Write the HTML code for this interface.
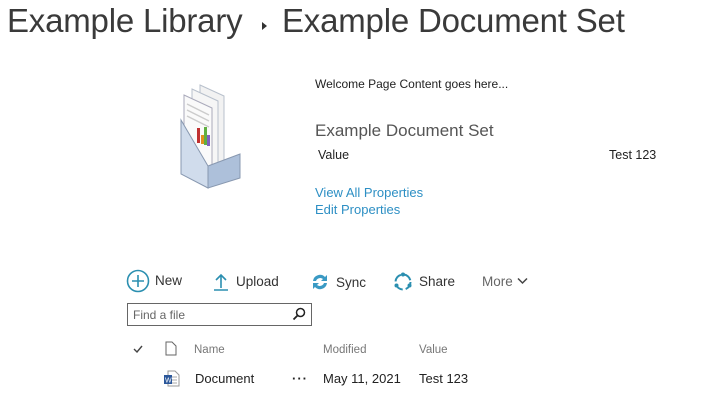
<!DOCTYPE html>
<html><head><meta charset="utf-8"><style>
*{margin:0;padding:0;box-sizing:border-box}
body{width:704px;height:401px;background:#fff;font-family:"Liberation Sans",sans-serif;color:#333;position:relative;overflow:hidden}
.a{position:absolute;white-space:nowrap}
.t{font-size:33px;color:#3a3a3a;font-weight:300;letter-spacing:-0.2px}
.link{color:#2d8fc4;font-size:13px}
.cmd{font-size:13.5px;color:#333}
.hdr{font-size:11.5px;color:#777}
</style></head><body>
<div class="a t" style="left:7px;top:2px">Example Library</div>
<svg class="a" style="left:261px;top:21px" width="7" height="10"><path d="M1 1L6 5L1 9Z" fill="#333"/></svg>
<div class="a t" style="left:282px;top:2px">Example Document Set</div>

<svg class="a" style="left:178px;top:82px" width="70" height="110" viewBox="0 0 70 110">
<path d="M22 3L46 14V86L22 75Z" fill="#f2f2f2" stroke="#b8c0cc"/>
<path d="M14 7L40 19V90L14 78Z" fill="#f6f6f6" stroke="#b8c0cc"/>
<path d="M6 13L34 26V94L6 82Z" fill="#fafafa" stroke="#aab"/>
<path d="M9 22L31 33M9 28L31 39M9 34L31 45" stroke="#ccc" stroke-width="1.5"/>
<rect x="19" y="46" width="3" height="15" fill="#c03030"/>
<rect x="23" y="53" width="3" height="9" fill="#e09020"/>
<rect x="26" y="45" width="3" height="18" fill="#60b040"/>
<rect x="29" y="53" width="3" height="11" fill="#8060c0"/>
<path d="M3 38L30 84L30 106L3 92Z" fill="#d0dcec" stroke="#8898b0"/>
<path d="M30 84L62 72V96L30 106Z" fill="#adc0da" stroke="#8898b0"/>
</svg>

<div class="a" style="left:315px;top:77px;font-size:12px;color:#222">Welcome Page Content goes here...</div>
<div class="a" style="left:315px;top:121px;font-size:17px;color:#555;font-weight:300">Example Document Set</div>
<div class="a" style="left:318px;top:148px;font-size:12.5px;color:#222">Value</div>
<div class="a" style="left:609px;top:148px;font-size:12.5px;color:#222">Test 123</div>
<div class="a link" style="left:315px;top:185px">View All Properties</div>
<div class="a link" style="left:315px;top:202px">Edit Properties</div>

<svg class="a" style="left:126px;top:269px" width="24" height="24"><circle cx="12" cy="12" r="10.5" fill="none" stroke="#2b8fb0" stroke-width="1.6"/><path d="M12 6V18M6 12H18" stroke="#2b8fb0" stroke-width="1.6"/></svg>
<div class="a cmd" style="left:155px;top:273px">New</div>
<svg class="a" style="left:212px;top:272px" width="18" height="20"><path d="M9 3V16M4 8L9 3L14 8M2 18H16" fill="none" stroke="#2b8fb0" stroke-width="1.6"/></svg>
<div class="a cmd" style="left:236px;top:274px">Upload</div>
<svg class="a" style="left:310px;top:272px" width="20" height="20"><path d="M3 9A7 7 0 0 1 15 5L17 3V9H11L13 7A4.5 4.5 0 0 0 6 9Z" fill="#3a9ac4"/><path d="M17 11A7 7 0 0 1 5 15L3 17V11H9L7 13A4.5 4.5 0 0 0 14 11Z" fill="#3a9ac4"/></svg>
<div class="a cmd" style="left:336px;top:275px">Sync</div>
<svg class="a" style="left:393px;top:272px" width="20" height="20"><circle cx="10" cy="10" r="7.5" fill="none" stroke="#2b8fb0" stroke-width="2" stroke-dasharray="9 3"/><circle cx="10" cy="2.5" r="2" fill="#2b8fb0"/><circle cx="3.5" cy="13.5" r="2" fill="#2b8fb0"/><circle cx="16.5" cy="13.5" r="2" fill="#2b8fb0"/></svg>
<div class="a cmd" style="left:419px;top:274px">Share</div>
<div class="a cmd" style="left:482px;top:274px;color:#666">More</div>
<svg class="a" style="left:517px;top:277px" width="11" height="8"><path d="M1 1.5L5.5 6L10 1.5" fill="none" stroke="#444" stroke-width="1.5"/></svg>

<div class="a" style="left:127px;top:303px;width:185px;height:23px;border:1px solid #666"></div>
<div class="a" style="left:133px;top:308px;font-size:12px;color:#666">Find a file</div>
<svg class="a" style="left:292px;top:307px" width="14" height="14"><circle cx="8.5" cy="5.5" r="4" fill="none" stroke="#222" stroke-width="1.5"/><path d="M5.5 8.5L1.5 12.5" stroke="#222" stroke-width="1.8"/></svg>

<svg class="a" style="left:133px;top:345px" width="10" height="8"><path d="M1 4L4 7L9 1" fill="none" stroke="#444" stroke-width="1.4"/></svg>
<svg class="a" style="left:165px;top:341px" width="12" height="15"><path d="M1 1H7L11 5V14H1Z" fill="none" stroke="#666"/></svg>
<div class="a hdr" style="left:194px;top:344px">Name</div>
<div class="a hdr" style="left:323px;top:344px">Modified</div>
<div class="a hdr" style="left:419px;top:344px">Value</div>

<svg class="a" style="left:163px;top:370px" width="17" height="17"><path d="M5 1H12L16 5V16H5Z" fill="#fff" stroke="#999"/><path d="M8 7H14M8 10H14M8 13H14" stroke="#aaa"/><rect x="1" y="5" width="8" height="9" fill="#2b579a"/><text x="2" y="12.5" font-size="7" fill="#fff" font-family="Liberation Sans">W</text></svg>
<div class="a" style="left:195px;top:371px;font-size:13px;color:#222">Document</div>
<div class="a" style="left:292px;top:371px;font-size:13px;color:#222;letter-spacing:1px;font-weight:bold">···</div>
<div class="a" style="left:323px;top:371px;font-size:13px;color:#222">May 11, 2021</div>
<div class="a" style="left:419px;top:371px;font-size:13px;color:#222">Test 123</div>
</body></html>
